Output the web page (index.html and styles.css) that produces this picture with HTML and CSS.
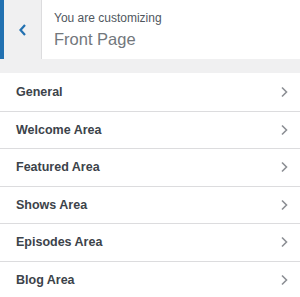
FILE: index.html
```html
<!DOCTYPE html>
<html lang="en">
<head>
    <meta charset="UTF-8">
    <title>Customize</title>
    <link rel="stylesheet" href="styles.css">
</head>
<body>
    <div class="panel-header">
        <button class="back-btn" type="button" aria-label="Back">
            <svg width="10" height="14" viewBox="0 0 10 14"><polyline points="7,2 2.5,7 7,12" fill="none" stroke="#2271b1" stroke-width="2.2"/></svg>
        </button>
        <div class="panel-title">
            <span class="pre">You are customizing</span>
            <span class="name">Front Page</span>
        </div>
    </div>
    <ul class="sections">
        <li>General <svg class="chev" width="8" height="12" viewBox="0 0 8 12"><polyline points="2,1.5 6.5,6 2,10.5" fill="none" stroke="#8c8f94" stroke-width="1.6"/></svg></li>
        <li>Welcome Area <svg class="chev" width="8" height="12" viewBox="0 0 8 12"><polyline points="2,1.5 6.5,6 2,10.5" fill="none" stroke="#8c8f94" stroke-width="1.6"/></svg></li>
        <li>Featured Area <svg class="chev" width="8" height="12" viewBox="0 0 8 12"><polyline points="2,1.5 6.5,6 2,10.5" fill="none" stroke="#8c8f94" stroke-width="1.6"/></svg></li>
        <li>Shows Area <svg class="chev" width="8" height="12" viewBox="0 0 8 12"><polyline points="2,1.5 6.5,6 2,10.5" fill="none" stroke="#8c8f94" stroke-width="1.6"/></svg></li>
        <li>Episodes Area <svg class="chev" width="8" height="12" viewBox="0 0 8 12"><polyline points="2,1.5 6.5,6 2,10.5" fill="none" stroke="#8c8f94" stroke-width="1.6"/></svg></li>
        <li>Blog Area <svg class="chev" width="8" height="12" viewBox="0 0 8 12"><polyline points="2,1.5 6.5,6 2,10.5" fill="none" stroke="#8c8f94" stroke-width="1.6"/></svg></li>
    </ul>
</body>
</html>
```

FILE: styles.css
```css
body {
    margin: 0;
    font-family: "Liberation Sans", Arial, sans-serif;
    background: #f0f0f1;
    color: #3c434a;
}
.panel-header {
    display: flex;
    height: 59px;
    background: #fff;
}
.back-btn {
    width: 42px;
    padding: 0;
    border: none;
    border-left: 4px solid #2271b1;
    border-right: 1px solid #dcdcde;
    background: #f0f0f1;
    display: flex;
    align-items: center;
    justify-content: center;
}
.panel-title {
    display: flex;
    flex-direction: column;
    padding: 11px 0 0 12px;
}
.pre {
    font-size: 12px;
    color: #50575e;
}
.name {
    font-size: 16.5px;
    color: #72777c;
    margin-top: 5px;
}
.sections {
    list-style: none;
    margin: 14px 0 0;
    padding: 0;
    background: #fff;
}
.sections li {
    display: flex;
    align-items: center;
    justify-content: space-between;
    height: 36.5px;
    padding: 0 12px 0 16px;
    border-bottom: 1px solid #dcdcde;
    font-size: 12.5px;
    font-weight: bold;
}
.sections li:first-child {
    height: 37.5px;
}
.sections li:last-child {
    border-bottom: none;
}
```
